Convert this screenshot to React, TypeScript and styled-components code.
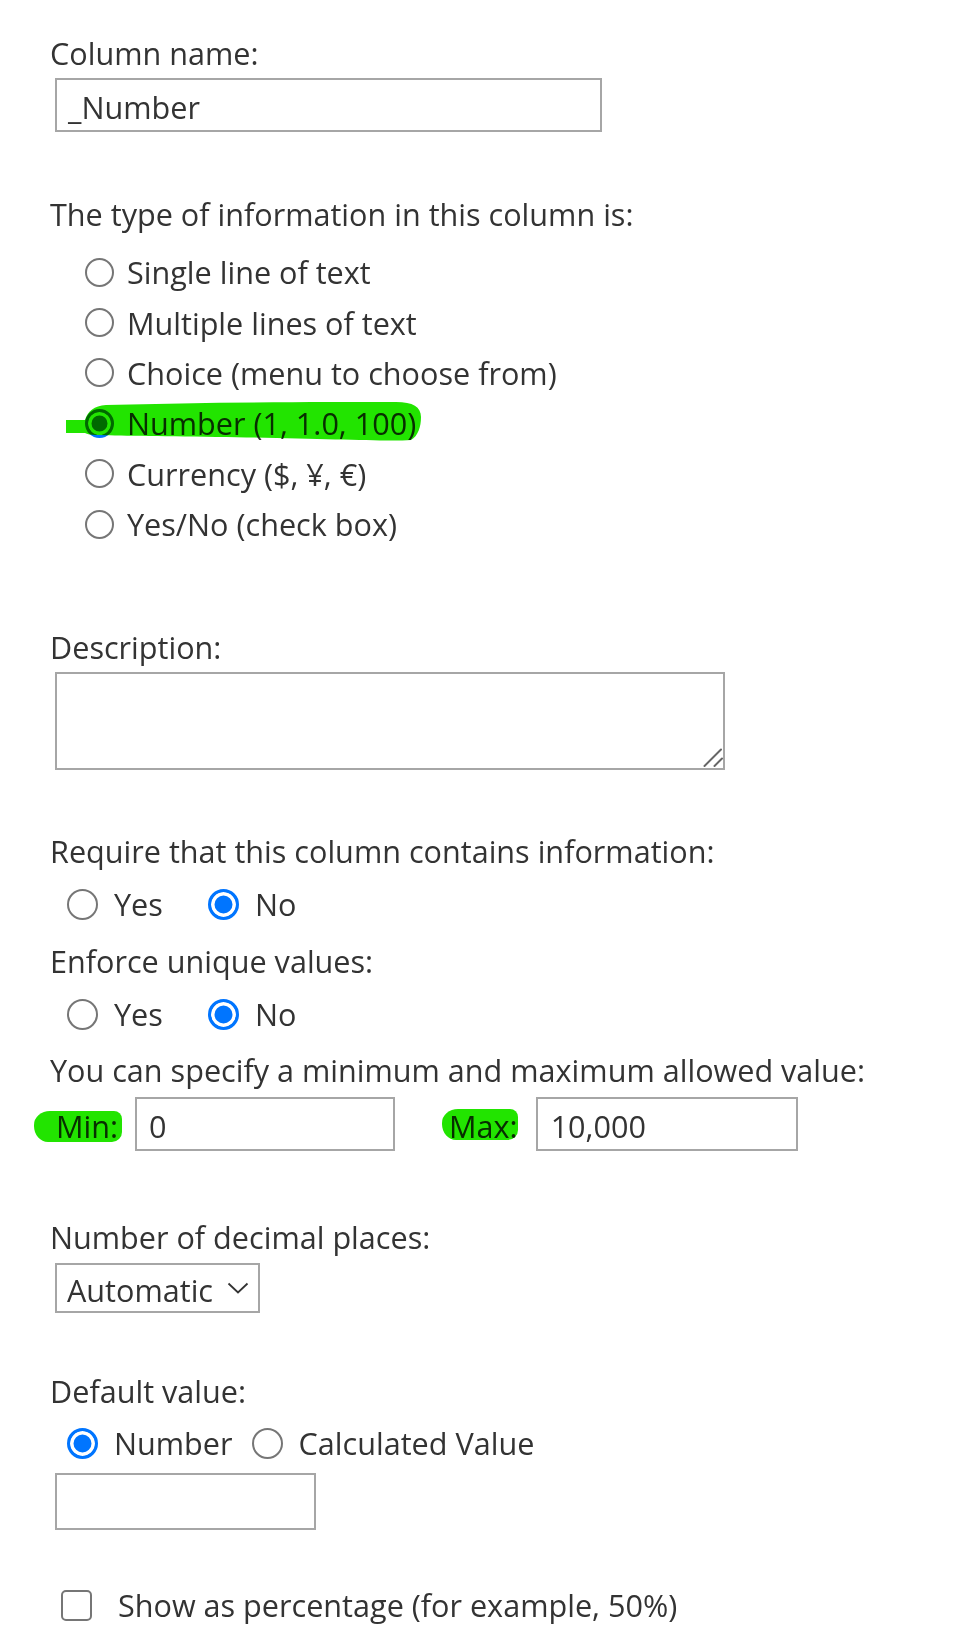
import React from "react";
import styled, { createGlobalStyle } from "styled-components";

const FONT = "30.6px";

const GlobalStyle = createGlobalStyle`
  html, body {
    margin: 0;
    padding: 0;
    background: #ffffff;
  }

  body {
    font-family: "Open Sans", "Noto Sans", sans-serif;
    color: #333333;
  }
`;

const Page = styled.div`
  width: 966px;
  min-height: 1629px;
  box-sizing: border-box;
  padding: 31px 0 0 50px;
`;

const Label = styled.div<{ $top?: number }>`
  margin-top: ${(p) => p.$top ?? 0}px;
  padding-top: 4px;
  font-size: ${FONT};
  line-height: 36px;
  white-space: nowrap;
`;

const TextBox = styled.div<{
  $top?: number;
  $left?: number;
  $width: number;
  $height: number;
  $pad?: number;
}>`
  box-sizing: border-box;
  margin-top: ${(p) => p.$top ?? 0}px;
  margin-left: ${(p) => p.$left ?? 5}px;
  width: ${(p) => p.$width}px;
  height: ${(p) => p.$height}px;
  border: 2px solid #a6a6a6;
  padding: 4px 0 0 ${(p) => p.$pad ?? 11}px;

  display: flex;
  align-items: center;

  font-size: ${FONT};
  color: #333333;
`;

const TextArea = styled.div`
  box-sizing: border-box;
  margin: 7px 0 0 5px;
  width: 670px;
  height: 98px;
  border: 2px solid #a6a6a6;

  display: flex;
  align-items: flex-end;
  justify-content: flex-end;
`;

const RadioList = styled.div<{ $top: number }>`
  margin-top: ${(p) => p.$top}px;
  padding-left: 35px;
`;

const RadioRow = styled.div<{ $top?: number; $left?: number; $height?: number }>`
  position: relative;
  margin-top: ${(p) => p.$top ?? 0}px;
  padding-left: ${(p) => p.$left ?? 0}px;
  height: ${(p) => p.$height ?? 50}px;

  display: flex;
  align-items: center;
`;

const Option = styled.label<{ $gap: number; $after?: number }>`
  display: flex;
  align-items: center;
  gap: ${(p) => p.$gap}px;
  margin-right: ${(p) => p.$after ?? 0}px;

  font-size: ${FONT};
  line-height: 40px;
  white-space: nowrap;
`;

const Radio = styled.span<{ $checked?: boolean; $size: number }>`
  box-sizing: border-box;
  flex: none;
  width: ${(p) => p.$size}px;
  height: ${(p) => p.$size}px;
  border-radius: 50%;
  border: ${(p) => (p.$checked ? "3.5px solid #0075ff" : "2.5px solid #767676")};
  background: ${(p) => (p.$checked ? "#0075ff" : "#ffffff")};
  box-shadow: ${(p) => (p.$checked ? "inset 0 0 0 3.5px #ffffff" : "none")};
`;

const Checkbox = styled.span`
  box-sizing: border-box;
  flex: none;
  width: 31px;
  height: 31px;
  border: 2.5px solid #767676;
  border-radius: 5px;
  background: #ffffff;
`;

const Marker = styled.svg`
  position: absolute;
  left: -19px;
  top: 2px;
  mix-blend-mode: multiply;
  pointer-events: none;
`;

const RangeRow = styled.div`
  margin-top: 9px;
  display: flex;
  align-items: center;
`;

const Highlight = styled.span<{ $l: number; $r: number; $t: number; $ml: number }>`
  position: relative;
  display: inline-block;
  margin-left: ${(p) => p.$ml}px;
  padding-top: 4px;
  font-size: ${FONT};
  line-height: 36px;

  &::before {
    content: "";
    position: absolute;
    left: ${(p) => p.$l}px;
    right: ${(p) => p.$r}px;
    top: ${(p) => p.$t}px;
    height: 31px;
    background: #22e400;
    border-radius: 16px 8px 10px 14px / 14px 8px 10px 16px;
    mix-blend-mode: multiply;
  }
`;

const SelectBox = styled.div`
  box-sizing: border-box;
  margin: 8px 0 0 5px;
  width: 205px;
  height: 50px;
  border: 2px solid #a6a6a6;
  padding: 4px 9px 0 10px;

  display: flex;
  align-items: center;
  justify-content: space-between;

  font-size: ${FONT};
`;

const Chevron = styled.svg`
  margin-top: -4px;
`;

const CheckRow = styled.div`
  margin-top: 50px;
  padding-left: 11px;
  height: 50px;
  display: flex;
  align-items: center;
  gap: 26px;

  font-size: ${FONT};
  white-space: nowrap;
`;

const types = [
  "Single line of text",
  "Multiple lines of text",
  "Choice (menu to choose from)",
  "Number (1, 1.0, 100)",
  "Currency ($, ¥, €)",
  "Yes/No (check box)",
];

function YesNo({ top }: { top: number }) {
  return (
    <RadioRow $top={top} $left={17}>
      <Option $gap={16} $after={45}>
        <Radio $size={31} />
        Yes
      </Option>
      <Option $gap={16}>
        <Radio $size={31} $checked />
        No
      </Option>
    </RadioRow>
  );
}

export default function App() {
  return (
    <Page>
      <GlobalStyle />

      <Label>Column name:</Label>
      <TextBox $top={7} $width={547} $height={54}>
        _Number
      </TextBox>

      <Label $top={60}>The type of information in this column is:</Label>
      <RadioList $top={15}>
        {types.map((t) => {
          const selected = t.startsWith("Number");
          return (
            <RadioRow key={t} $height={50.4}>
              {selected && (
                <Marker width="356" height="44" viewBox="0 0 356 44">
                  <path
                    d="M0 20 L19 20 C22 11 28 6 40 5 C140 2 250 2 330 2 C347 2 355 7 355 17 C355 27 352 36 345 40 C320 42 250 38 150 37 C90 36 50 36 30 35 C25 35 21 34 19 33 L0 33 Z"
                    fill="#22e400"
                  />
                </Marker>
              )}
              <Option $gap={13}>
                <Radio $size={29} $checked={selected} />
                {t}
              </Option>
            </RadioRow>
          );
        })}
      </RadioList>

      <Label $top={76}>Description:</Label>
      <TextArea>
        <svg width="20" height="20" viewBox="0 0 20 20">
          <path
            d="M1.5 19 L18.5 1.5 M11.5 19 L19 11.5"
            stroke="#ffffff"
            strokeWidth="3.5"
            strokeLinecap="round"
            fill="none"
          />
          <path
            d="M1.5 18 L18 1.5 M11.5 18 L19 10.5"
            stroke="#666666"
            strokeWidth="2"
            strokeLinecap="round"
            fill="none"
          />
        </svg>
      </TextArea>

      <Label $top={59}>Require that this column contains information:</Label>
      <YesNo top={10} />

      <Label $top={10}>Enforce unique values:</Label>
      <YesNo top={10} />

      <Label $top={9}>You can specify a minimum and maximum allowed value:</Label>
      <RangeRow>
        <Highlight $l={-22} $r={-4} $t={7} $ml={6}>
          Min:
        </Highlight>
        <TextBox $left={17} $width={260} $height={54} $pad={12}>
          0
        </TextBox>
        <Highlight $l={-7} $r={0} $t={5} $ml={54}>
          Max:
        </Highlight>
        <TextBox $left={18} $width={262} $height={54} $pad={13}>
          10,000
        </TextBox>
      </RangeRow>

      <Label $top={64}>Number of decimal places:</Label>
      <SelectBox>
        Automatic
        <Chevron width="22" height="12" viewBox="0 0 22 12">
          <polyline
            points="1.5,1.5 11,10.5 20.5,1.5"
            fill="none"
            stroke="#333333"
            strokeWidth="1.8"
          />
        </Chevron>
      </SelectBox>

      <Label $top={56}>Default value:</Label>
      <RadioRow $top={9} $left={17}>
        <Option $gap={16} $after={19}>
          <Radio $size={31} $checked />
          Number
        </Option>
        <Option $gap={16}>
          <Radio $size={31} />
          Calculated Value
        </Option>
      </RadioRow>
      <TextBox $top={5} $width={261} $height={57} />

      <CheckRow>
        <Checkbox />
        Show as percentage (for example, 50%)
      </CheckRow>
    </Page>
  );
}
